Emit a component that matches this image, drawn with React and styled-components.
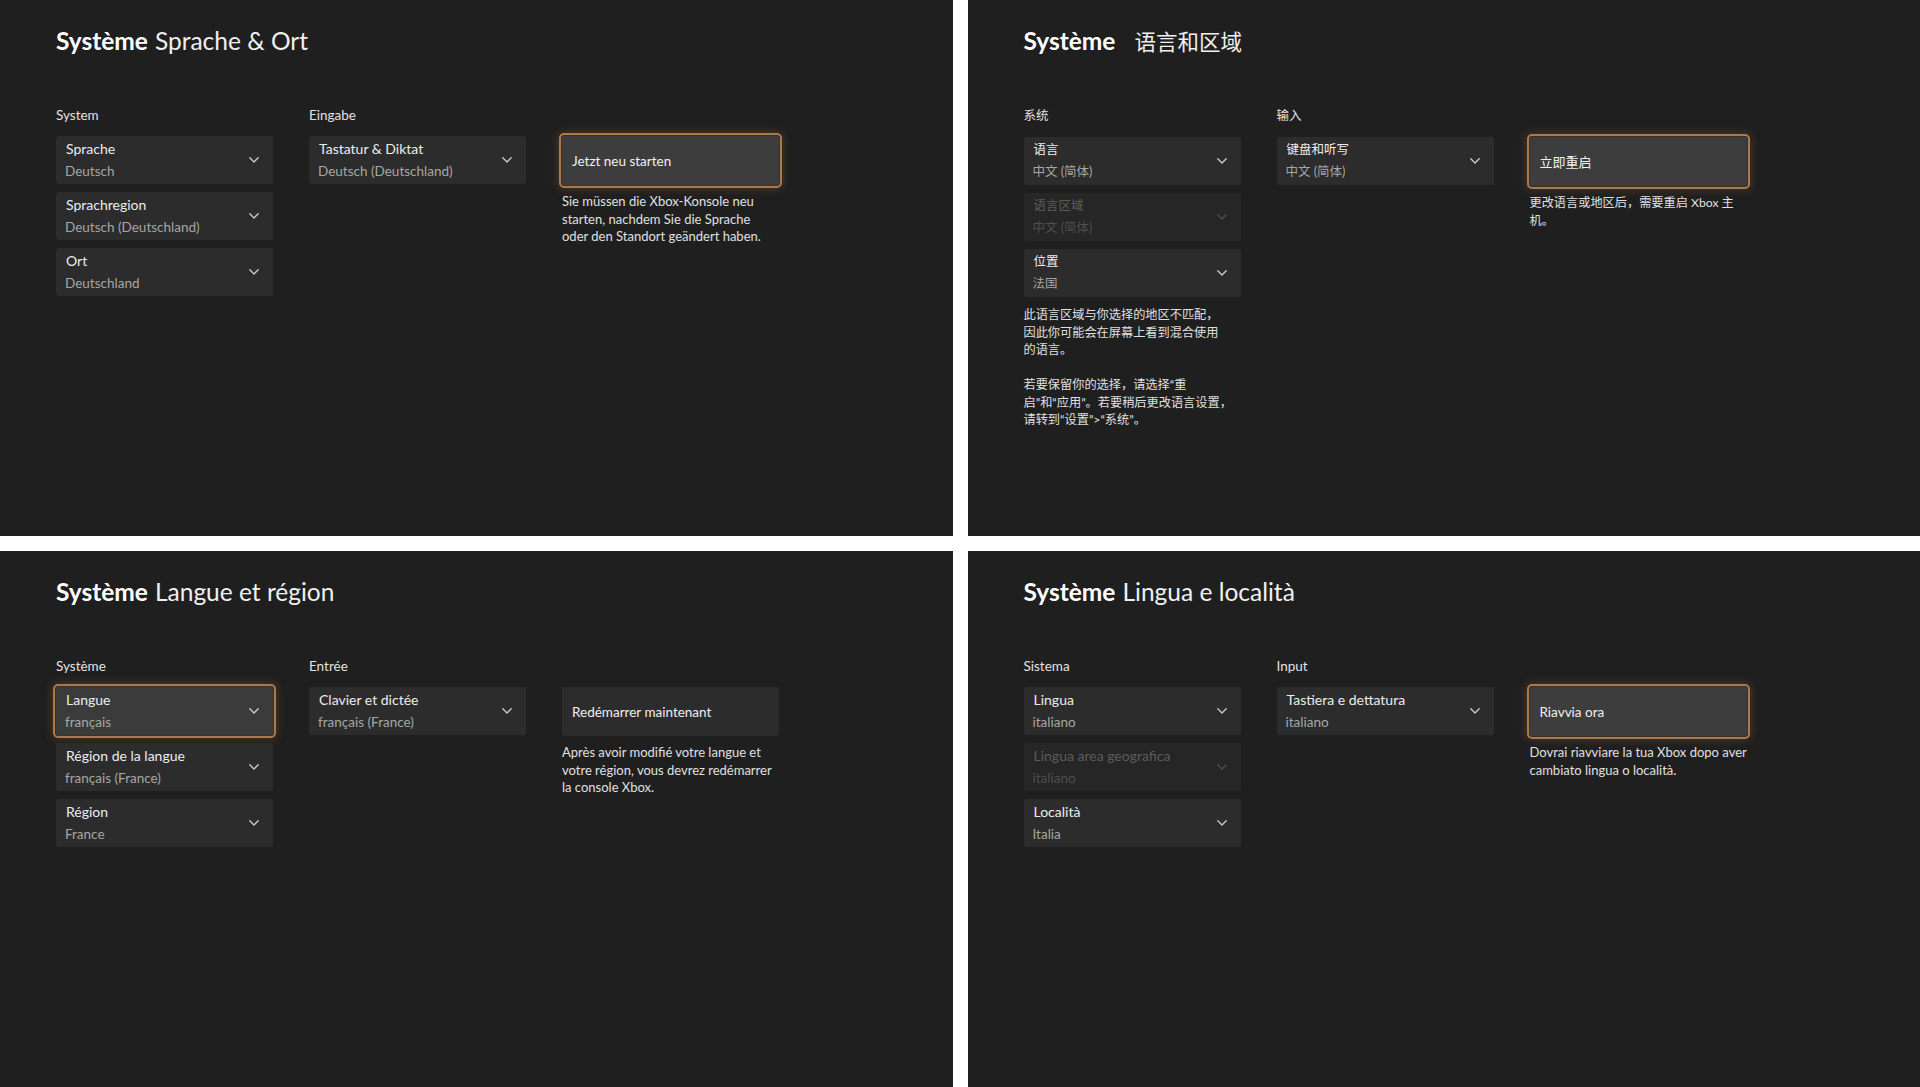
import React from 'react';
import styled, { createGlobalStyle, css } from 'styled-components';

const GlobalStyle = createGlobalStyle`
  html, body { margin: 0; padding: 0; background: #ffffff; }
  body {
    font-family: Lato, "Noto Sans CJK SC", sans-serif;
    -webkit-font-smoothing: antialiased;
  }
  * { box-sizing: border-box; }
`;

const Page = styled.main`
  display: grid;
  grid-template-columns: 1fr 1fr;
  grid-template-rows: 1fr 1fr;
  gap: 15px;
  width: 1920px;
  height: 1087px;
  background: #ffffff;
`;

const Panel = styled.section`
  background: #1f1f1f;
  padding: 26px 0 0 56px;
  overflow: hidden;
  color: #e8e8e8;
`;

const Heading = styled.h1`
  margin: 0;
  font-size: 24.5px;
  line-height: 30px;
  font-weight: 400;
  color: #f0f0f0;
  white-space: nowrap;
`;

const HeadingBold = styled.span`
  font-weight: 700;
  color: #ffffff;
  margin-right: 7px;
`;

const HeadingSub = styled.span`
  font-size: ${(p) => (p.$cjk ? '21.5px' : 'inherit')};
  margin-left: ${(p) => (p.$cjk ? '12px' : '0')};
`;

const Columns = styled.div`
  display: grid;
  grid-template-columns: repeat(3, 217px);
  column-gap: 36px;
  row-gap: 12px;
  margin-top: 50px;
  align-items: start;
`;

const ColumnLabel = styled.div`
  font-size: ${(p) => (p.$cjk ? '12.5px' : '13.5px')};
  line-height: 18px;
  height: 18px;
  color: #e2e2e2;
`;

const Column = styled.div`
  display: flex;
  flex-direction: column;
  gap: 8px;
`;

const focusRing = css`
  outline: 2px solid #a87a4d;
  outline-offset: 1px;
  box-shadow: 0 0 10px 4px rgba(150, 100, 55, 0.35);
`;

const Dropdown = styled.div`
  display: flex;
  align-items: center;
  height: 48px;
  padding: 0 14px 0 10px;
  border-radius: 2px;
  background: ${(p) => (p.$focused ? '#3b3b3b' : p.$disabled ? '#262626' : '#2c2c2c')};
  ${(p) => p.$focused && focusRing}
`;

const DropdownTexts = styled.div`
  flex: 1;
  display: flex;
  flex-direction: column;
  gap: 4px;
  min-width: 0;
`;

const DropdownTitle = styled.div`
  font-size: ${(p) => (p.$cjk ? '12.5px' : '14px')};
  line-height: 18px;
  color: ${(p) => (p.$disabled ? '#5c5c5c' : '#ececec')};
  white-space: nowrap;
`;

const DropdownValue = styled.div`
  font-size: ${(p) => (p.$cjk ? '12.5px' : '13.5px')};
  line-height: 18px;
  margin-left: -1px;
  color: ${(p) => (p.$disabled ? '#4e4e4e' : '#a6a6a6')};
  white-space: nowrap;
`;

const ChevronIcon = styled.svg`
  width: 10px;
  height: 6px;
  flex: none;
  overflow: visible;
`;

const RestartButton = styled.div`
  display: flex;
  align-items: center;
  height: 49px;
  padding: 0 10px;
  border-radius: 2px;
  font-size: ${(p) => (p.$cjk ? '13px' : '13.5px')};
  color: #f0f0f0;
  background: ${(p) => (p.$focused ? '#3d3d3d' : '#2c2c2c')};
  ${(p) => p.$focused && focusRing}
`;

const Description = styled.div`
  margin-top: ${(p) => (p.$gap ? `${p.$gap}px` : '8px')};
  font-size: ${(p) => (p.$cjk ? '12.2px' : '13px')};
  line-height: 17.5px;
  color: #e0e0e0;
  white-space: nowrap;
`;

const Paragraph = styled.p`
  margin: 0 0 17.5px 0;
  &:last-child { margin-bottom: 0; }
`;

function Chevron({ dim }) {
  return (
    <ChevronIcon viewBox="0 0 10 6">
      <polyline
        points="0.8,0.8 5,5 9.2,0.8"
        fill="none"
        stroke={dim ? '#4e4e4e' : '#cfcfcf'}
        strokeWidth="1.3"
        strokeLinecap="round"
        strokeLinejoin="round"
      />
    </ChevronIcon>
  );
}

function Select({ title, value, focused, disabled, cjk }) {
  return (
    <Dropdown $focused={focused} $disabled={disabled}>
      <DropdownTexts>
        <DropdownTitle $cjk={cjk} $disabled={disabled}>{title}</DropdownTitle>
        <DropdownValue $cjk={cjk} $disabled={disabled}>{value}</DropdownValue>
      </DropdownTexts>
      <Chevron dim={disabled} />
    </Dropdown>
  );
}

function Lines({ lines }) {
  return lines.map((l, i) => (
    <React.Fragment key={i}>
      {l}
      {i < lines.length - 1 && <br />}
    </React.Fragment>
  ));
}

const panels = [
  {
    title: 'Sprache & Ort',
    labels: ['System', 'Eingabe'],
    system: [
      { title: 'Sprache', value: 'Deutsch' },
      { title: 'Sprachregion', value: 'Deutsch (Deutschland)' },
      { title: 'Ort', value: 'Deutschland' },
    ],
    input: [{ title: 'Tastatur & Diktat', value: 'Deutsch (Deutschland)' }],
    restart: 'Jetzt neu starten',
    restartFocused: true,
    desc: ['Sie müssen die Xbox-Konsole neu', 'starten, nachdem Sie die Sprache', 'oder den Standort geändert haben.'],
  },
  {
    cjk: true,
    title: '语言和区域',
    labels: ['系统', '输入'],
    system: [
      { title: '语言', value: '中文 (简体)' },
      { title: '语言区域', value: '中文 (简体)', disabled: true },
      { title: '位置', value: '法国' },
    ],
    note: [
      ['此语言区域与你选择的地区不匹配，', '因此你可能会在屏幕上看到混合使用', '的语言。'],
      ['若要保留你的选择，请选择“重', '启”和“应用”。若要稍后更改语言设置，', '请转到“设置”>“系统”。'],
    ],
    input: [{ title: '键盘和听写', value: '中文 (简体)' }],
    restart: '立即重启',
    restartFocused: true,
    desc: ['更改语言或地区后，需要重启 Xbox 主', '机。'],
  },
  {
    title: 'Langue et région',
    labels: ['Système', 'Entrée'],
    system: [
      { title: 'Langue', value: 'français', focused: true },
      { title: 'Région de la langue', value: 'français (France)' },
      { title: 'Région', value: 'France' },
    ],
    input: [{ title: 'Clavier et dictée', value: 'français (France)' }],
    restart: 'Redémarrer maintenant',
    restartFocused: false,
    desc: ['Après avoir modifié votre langue et', 'votre région, vous devrez redémarrer', 'la console Xbox.'],
  },
  {
    title: 'Lingua e località',
    labels: ['Sistema', 'Input'],
    system: [
      { title: 'Lingua', value: 'italiano' },
      { title: 'Lingua area geografica', value: 'italiano', disabled: true },
      { title: 'Località', value: 'Italia' },
    ],
    input: [{ title: 'Tastiera e dettatura', value: 'italiano' }],
    restart: 'Riavvia ora',
    restartFocused: true,
    desc: ['Dovrai riavviare la tua Xbox dopo aver', 'cambiato lingua o località.'],
  },
];

function SettingsPanel({ p }) {
  const cjk = !!p.cjk;
  return (
    <Panel>
      <Heading>
        <HeadingBold>Système</HeadingBold>
        <HeadingSub $cjk={cjk}>{p.title}</HeadingSub>
      </Heading>
      <Columns>
        <ColumnLabel $cjk={cjk}>{p.labels[0]}</ColumnLabel>
        <ColumnLabel $cjk={cjk}>{p.labels[1]}</ColumnLabel>
        <ColumnLabel $cjk={cjk} />
        <div>
          <Column>
            {p.system.map((s, i) => (
              <Select key={i} {...s} cjk={cjk} />
            ))}
          </Column>
          {p.note && (
            <Description $cjk={cjk} $gap={9}>
              {p.note.map((para, i) => (
                <Paragraph key={i}>
                  <Lines lines={para} />
                </Paragraph>
              ))}
            </Description>
          )}
        </div>
        <Column>
          {p.input.map((s, i) => (
            <Select key={i} {...s} cjk={cjk} />
          ))}
        </Column>
        <div>
          <RestartButton $focused={p.restartFocused} $cjk={cjk}>{p.restart}</RestartButton>
          <Description $cjk={cjk}>
            <Lines lines={p.desc} />
          </Description>
        </div>
      </Columns>
    </Panel>
  );
}

export default function App() {
  return (
    <>
      <GlobalStyle />
      <Page>
        {panels.map((p, i) => (
          <SettingsPanel key={i} p={p} />
        ))}
      </Page>
    </>
  );
}
